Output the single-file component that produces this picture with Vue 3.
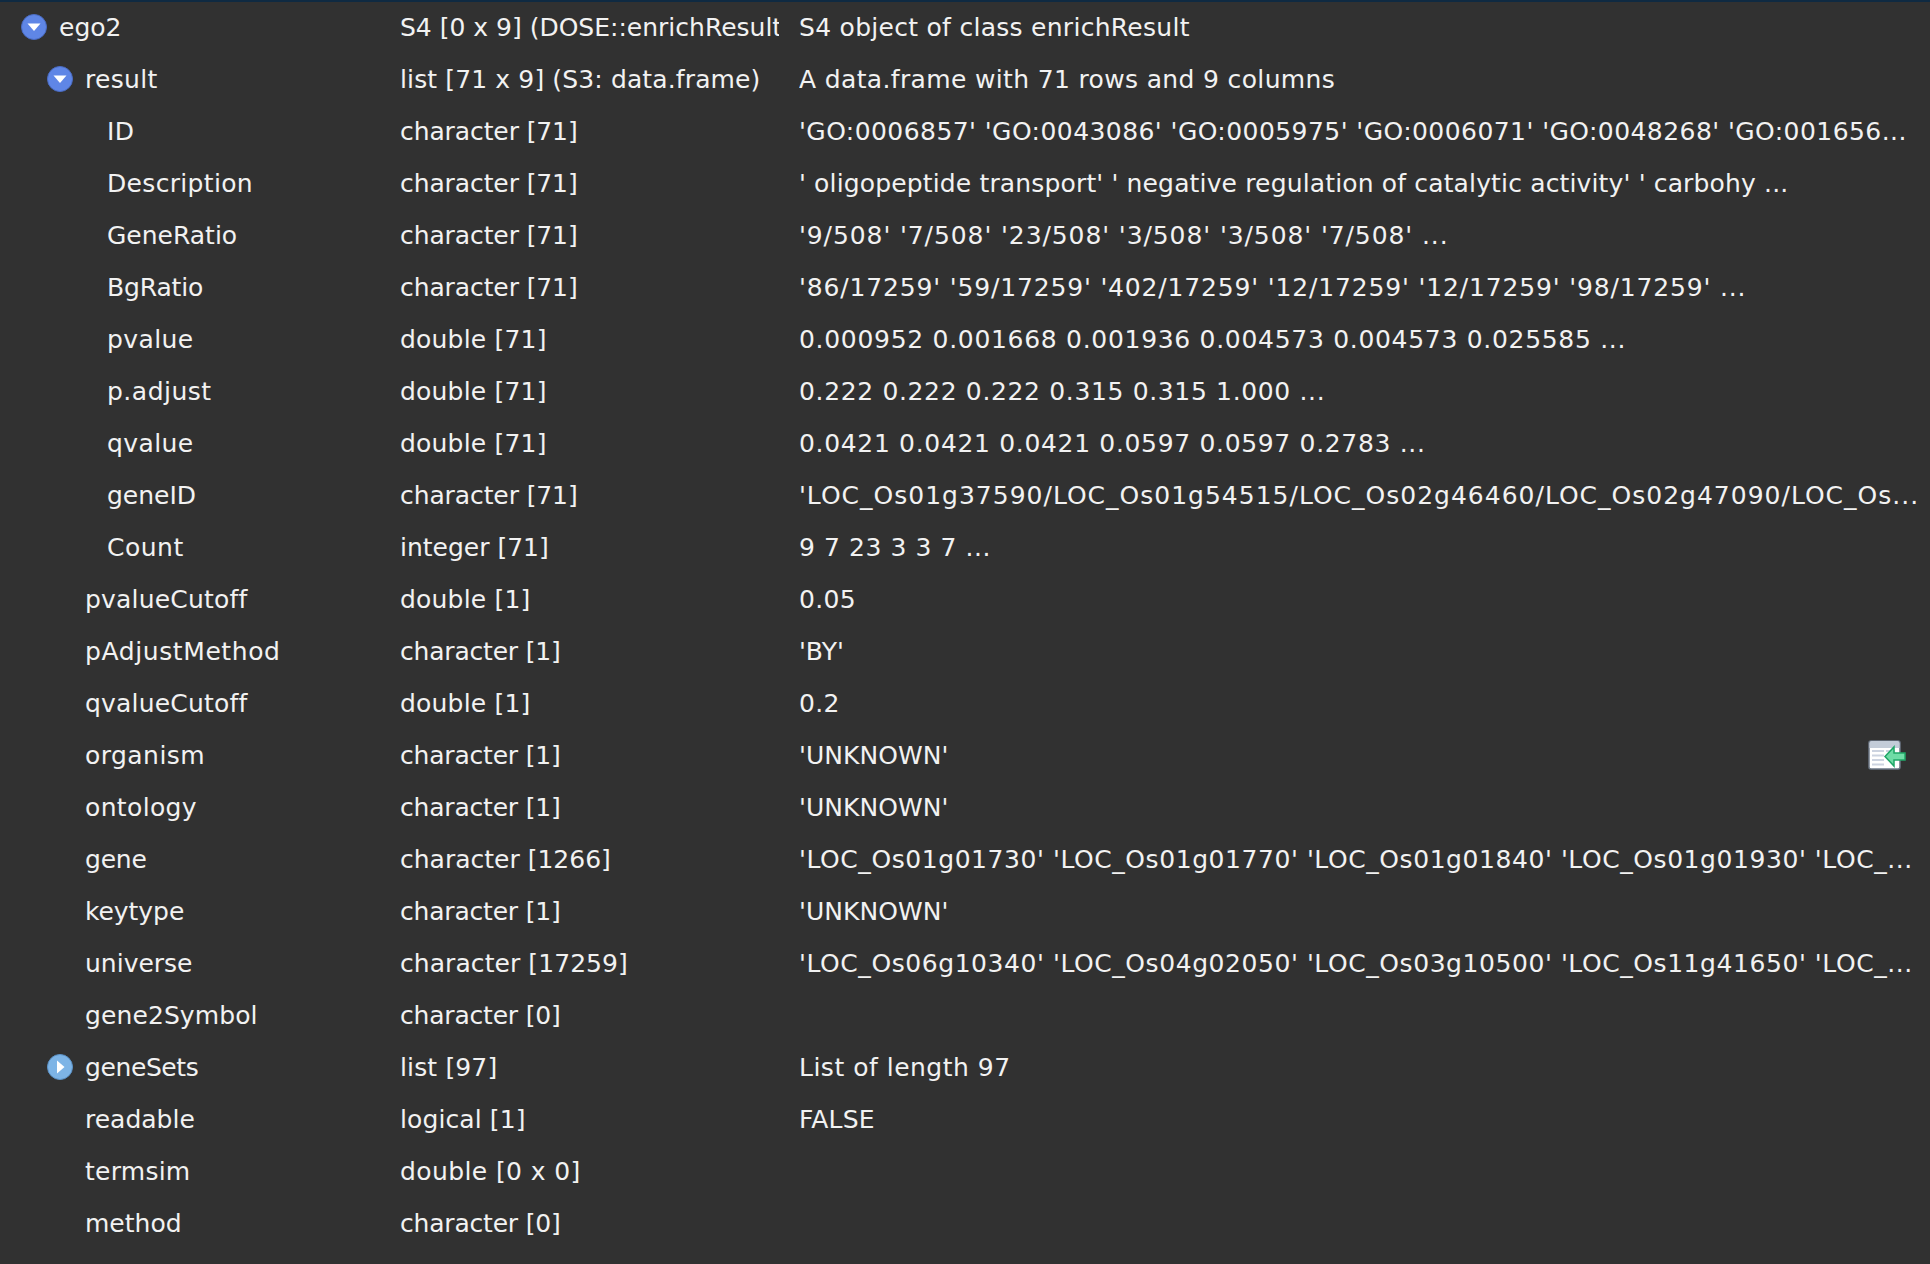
<template>
  <div class="env-pane">
    <div class="env-row" v-for="row in rows" :key="row.name">
      <div class="col-name" :class="'depth-' + row.depth" :style="track(row.t[0])">
        <svg v-if="row.toggle" class="toggle" viewBox="0 0 26 26" width="26" height="26">
          <circle cx="13" cy="13" r="12.5" :fill="row.toggle === 'open' ? '#5f86e6' : '#7db4e6'" />
          <circle cx="13" cy="13" r="12.5" fill="none" :stroke="row.toggle === 'open' ? '#4a6cc4' : '#5c93c8'" stroke-width="1" />
          <path v-if="row.toggle === 'open'" d="M6.5 9.5h13L13 17z" fill="#fff" />
          <path v-else d="M10 6.5v13l7.5-6.500z" fill="#fff" />
        </svg>
        <span>{{ row.name }}</span>
      </div>
      <div class="col-type" :style="track(row.t[1])">{{ row.type }}</div>
      <div class="col-value" :style="track(row.t[2])">{{ row.value }}</div>
      <svg v-if="row.name === 'organism'" class="view-icon" viewBox="0 0 38 30" width="38" height="30">
        <rect x="1" y="1" width="31" height="28" rx="2" fill="#fff" stroke="#6b7684" stroke-width="1.5" />
        <path d="M1.5 8V3a2 2 0 0 1 2-2h26a2 2 0 0 1 2 2v5z" fill="#c3ccd8" />
        <path d="M4 10h12v2H4zM4 14.500h12v2H4zM4 19h12v2H4zM4 23.500h12v2H4zM18 10h9v2h-9z" fill="#ccd3e0" />
        <path d="M17 16.500 26 7v6h11v7H26v6z" fill="#6fdca6" stroke="#1fa667" stroke-width="1.5" />
      </svg>
    </div>
  </div>
</template>

<script setup>
const track = (px) => ({ letterSpacing: px + 'px' })

const rows = [
  { name: 'ego2', depth: 0, toggle: 'open', type: 'S4 [0 x 9] (DOSE::enrichResult)', value: 'S4 object of class enrichResult', t: [0, 0, 0.28] },
  { name: 'result', depth: 1, toggle: 'open', type: 'list [71 x 9] (S3: data.frame)', value: 'A data.frame with 71 rows and 9 columns', t: [0.3, 0.13, 0.35] },
  { name: 'ID', depth: 2, type: 'character [71]', value: "'GO:0006857' 'GO:0043086' 'GO:0005975' 'GO:0006071' 'GO:0048268' 'GO:001656...", t: [0.5, -0.1, 0.44] },
  { name: 'Description', depth: 2, type: 'character [71]', value: "' oligopeptide transport' ' negative regulation of catalytic activity' ' carbohy ...", t: [0.33, -0.1, 0.15] },
  { name: 'GeneRatio', depth: 2, type: 'character [71]', value: "'9/508' '7/508' '23/508' '3/508' '3/508' '7/508' ...", t: [0, -0.1, 0.91] },
  { name: 'BgRatio', depth: 2, type: 'character [71]', value: "'86/17259' '59/17259' '402/17259' '12/17259' '12/17259' '98/17259' ...", t: [-0.15, -0.1, 0.84] },
  { name: 'pvalue', depth: 2, type: 'double [71]', value: '0.000952 0.001668 0.001936 0.004573 0.004573 0.025585 ...', t: [0.4, 0.2, 0.7] },
  { name: 'p.adjust', depth: 2, type: 'double [71]', value: '0.222 0.222 0.222 0.315 0.315 1.000 ...', t: [0.5, 0.2, 0.65] },
  { name: 'qvalue', depth: 2, type: 'double [71]', value: '0.0421 0.0421 0.0421 0.0597 0.0597 0.2783 ...', t: [0.4, 0.2, 0.67] },
  { name: 'geneID', depth: 2, type: 'character [71]', value: "'LOC_Os01g37590/LOC_Os01g54515/LOC_Os02g46460/LOC_Os02g47090/LOC_Os...", t: [0, -0.1, 1] },
  { name: 'Count', depth: 2, type: 'integer [71]', value: '9 7 23 3 3 7 ...', t: [0.5, 0, 0.57] },
  { name: 'pvalueCutoff', depth: 1, type: 'double [1]', value: '0.05', t: [0.2, 0.2, 0.3] },
  { name: 'pAdjustMethod', depth: 1, type: 'character [1]', value: "'BY'", t: [0.6, -0.2, 0] },
  { name: 'qvalueCutoff', depth: 1, type: 'double [1]', value: '0.2', t: [0.2, 0.2, 0.3] },
  { name: 'organism', depth: 1, type: 'character [1]', value: "'UNKNOWN'", t: [0.45, -0.2, 0.05] },
  { name: 'ontology', depth: 1, type: 'character [1]', value: "'UNKNOWN'", t: [0.35, -0.2, 0.05] },
  { name: 'gene', depth: 1, type: 'character [1266]', value: "'LOC_Os01g01730' 'LOC_Os01g01770' 'LOC_Os01g01840' 'LOC_Os01g01930' 'LOC_...", t: [-0.2, 0, 0.57] },
  { name: 'keytype', depth: 1, type: 'character [1]', value: "'UNKNOWN'", t: [-0.05, -0.2, 0.05] },
  { name: 'universe', depth: 1, type: 'character [17259]', value: "'LOC_Os06g10340' 'LOC_Os04g02050' 'LOC_Os03g10500' 'LOC_Os11g41650' 'LOC_...", t: [0, 0.07, 0.57] },
  { name: 'gene2Symbol', depth: 1, type: 'character [0]', value: '', t: [0.1, -0.2, 0] },
  { name: 'geneSets', depth: 1, toggle: 'closed', type: 'list [97]', value: 'List of length 97', t: [-0.4, 0.15, 0.5] },
  { name: 'readable', depth: 1, type: 'logical [1]', value: 'FALSE', t: [0, 0.1, 0.2] },
  { name: 'termsim', depth: 1, type: 'double [0 x 0]', value: '', t: [0.25, 0.4, 0] },
  { name: 'method', depth: 1, type: 'character [0]', value: '', t: [0, -0.2, 0] },
]
</script>

<style scoped>
.env-pane {
  height: 1264px;
  box-sizing: border-box;
  padding-top: 1px;
  background: #313131;
  box-shadow: inset 0 2px 0 #0f2a42;
  color: #f2f2f2;
  font-family: "DejaVu Sans", sans-serif;
  font-size: 25px;
  overflow: hidden;
}

.env-row {
  display: flex;
  align-items: center;
  height: 52px;
  position: relative;
  white-space: nowrap;
}

.col-name {
  width: 400px;
  flex: none;
  box-sizing: border-box;
  display: flex;
  align-items: center;
}

.depth-0 { padding-left: 21px; }
.depth-1 { padding-left: 47px; }
.depth-2 { padding-left: 107px; }

.toggle {
  flex: none;
  margin-right: 12px;
}

.depth-1:not(:has(.toggle)) {
  padding-left: 85px;
}

.col-type {
  width: 379px;
  flex: none;
  overflow: hidden;
  margin-right: 20px;
}

.col-value {
  flex: 1;
  min-width: 0;
  overflow: hidden;
}

.view-icon {
  position: absolute;
  left: 1868px;
  top: 11px;
}
</style>

<style>
html, body {
  margin: 0;
  background: #313131;
}
</style>
